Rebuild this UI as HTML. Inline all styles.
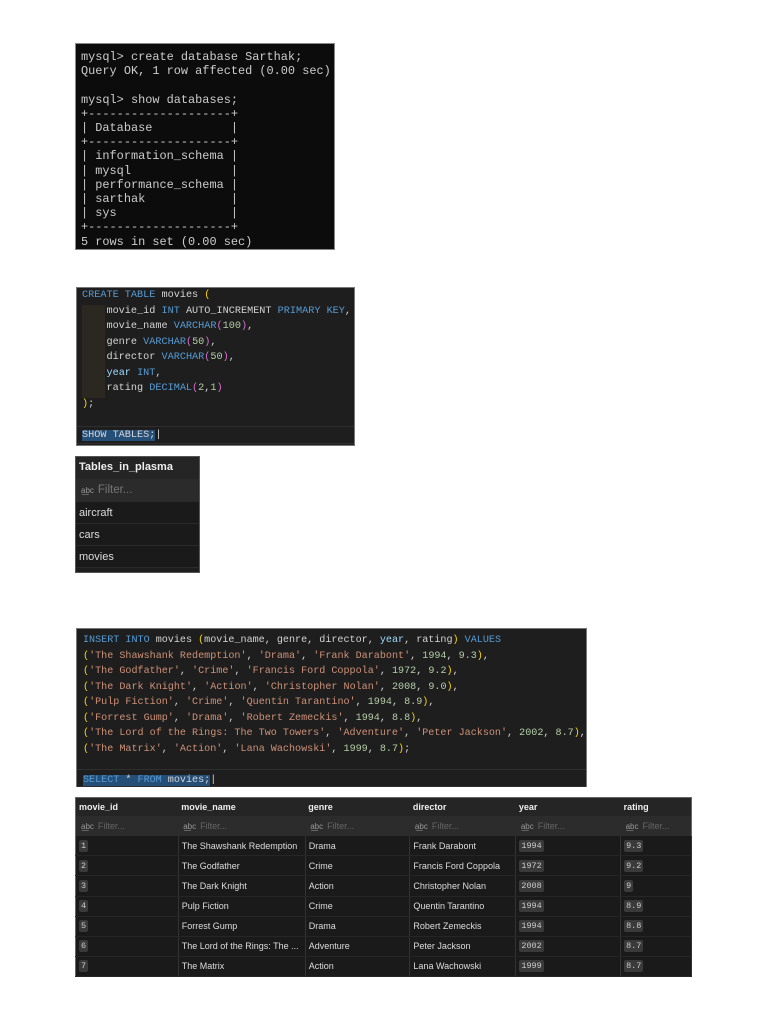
<!DOCTYPE html>
<html><head><meta charset="utf-8"><style>
*{margin:0;padding:0;box-sizing:border-box}
body{width:768px;height:1024px;background:#fff;position:relative;overflow:hidden}
.mono{font-family:"Liberation Mono",monospace;white-space:pre}
#t1{position:absolute;left:75px;top:43px;width:260px;height:207px;background:#0c0c0c;border:1px solid #888;color:#cccccc;font-size:11.9px;line-height:14.2px;padding:6px 0 0 5px}
#t2{position:absolute;left:76px;top:287px;width:279px;height:159px;background:#1e1e1e;border:1px solid #777;color:#d4d4d4;font-size:10.2px;line-height:15.5px;padding:0 0 0 5px}
#t4{position:absolute;left:76px;top:628px;width:511px;height:159px;background:#1e1e1e;border:1px solid #777;color:#d4d4d4;font-size:10.1px;line-height:15.5px;padding:4px 0 0 6px}
.k{color:#569cd6}.p{color:#ffd700}.m{color:#da70d6}.n{color:#b5cea8}.s{color:#ce9178}.i{color:#9cdcfe}
.guide{position:absolute;left:5px;top:17px;width:23px;height:93px;background:#2b2822}
.hl{background:#264f78}
.cur{position:absolute;left:0;right:0;border-top:1px solid #2e2e2e;border-bottom:1px solid #2e2e2e}
.sans{font-family:"Liberation Sans",sans-serif}
#t3{position:absolute;left:75px;top:456px;width:125px;height:117px;background:#1e1e1e;border:1px solid #555;font-size:11px;color:#ddd}
#t3 .h{height:22px;background:#252526;font-weight:bold;padding:4px 3px;color:#eee}
#t3 .f{height:23px;background:#2b2b2b;padding:5px 5px;color:#777;font-size:11.5px}
#t3 .r{height:22px;border-bottom:1px solid #2a2a2a;padding:5px 3px;background:#1a1a1a}
#t5{position:absolute;left:75px;top:797px;width:617px;height:180px;background:#1e1e1e;border:1px solid #666;font-size:9px;color:#ddd;border-collapse:collapse}
#t5 td{border-right:1px solid #333;padding:0 3px;white-space:nowrap;overflow:hidden}
#t5 tr.h td{height:18px;background:#252526;font-weight:bold;color:#eee;border-right:none}
#t5 tr.f td{height:20px;background:#2c2c2c;color:#666;border-right:none;padding-left:5px}
#t5 tr.r td{height:20px;border-bottom:1px solid #262626;background:#1a1a1a}
.b{display:inline-block;background:#3a3a3a;border-radius:2px;padding:1px 2px;font-family:"Liberation Mono",monospace;font-size:8.5px;color:#ccc}
.ic{color:#999;font-size:8px;margin-right:4px}
</style></head><body>

<div id="t1" class="mono">mysql&gt; create database Sarthak;
Query OK, 1 row affected (0.00 sec)

mysql&gt; show databases;
+--------------------+
| Database           |
+--------------------+
| information_schema |
| mysql              |
| performance_schema |
| sarthak            |
| sys                |
+--------------------+
5 rows in set (0.00 sec)</div>

<div id="t2" class="mono"><div class="guide"></div><div class="cur" style="top:138px;height:18px"></div><div style="position:relative"><span class="k">CREATE TABLE</span> movies <span class="p">(</span>
    movie_id <span class="k">INT</span> AUTO_INCREMENT <span class="k">PRIMARY KEY</span>,
    movie_name <span class="k">VARCHAR</span><span class="m">(</span><span class="n">100</span><span class="m">)</span>,
    genre <span class="k">VARCHAR</span><span class="m">(</span><span class="n">50</span><span class="m">)</span>,
    director <span class="k">VARCHAR</span><span class="m">(</span><span class="n">50</span><span class="m">)</span>,
    <span class="i">year</span> <span class="k">INT</span>,
    rating <span class="k">DECIMAL</span><span class="m">(</span><span class="n">2</span>,<span class="n">1</span><span class="m">)</span>
<span class="p">)</span>;

<span class="hl">SHOW TABLES;</span>|</div></div>

<div id="t3" class="sans">
<div class="h">Tables_in_plasma</div>
<div class="f"><span class="ic">a͟bc</span>Filter...</div>
<div class="r">aircraft</div>
<div class="r">cars</div>
<div class="r">movies</div>
</div>

<div id="t4" class="mono"><div class="cur" style="top:140px;height:18px"></div><div style="position:relative"><span class="k">INSERT INTO</span> movies <span class="p">(</span>movie_name, genre, director, <span class="i">year</span>, rating<span class="p">)</span> <span class="k">VALUES</span>
<span class="p">(</span><span class="s">'The Shawshank Redemption'</span>, <span class="s">'Drama'</span>, <span class="s">'Frank Darabont'</span>, <span class="n">1994</span>, <span class="n">9.3</span><span class="p">)</span>,
<span class="p">(</span><span class="s">'The Godfather'</span>, <span class="s">'Crime'</span>, <span class="s">'Francis Ford Coppola'</span>, <span class="n">1972</span>, <span class="n">9.2</span><span class="p">)</span>,
<span class="p">(</span><span class="s">'The Dark Knight'</span>, <span class="s">'Action'</span>, <span class="s">'Christopher Nolan'</span>, <span class="n">2008</span>, <span class="n">9.0</span><span class="p">)</span>,
<span class="p">(</span><span class="s">'Pulp Fiction'</span>, <span class="s">'Crime'</span>, <span class="s">'Quentin Tarantino'</span>, <span class="n">1994</span>, <span class="n">8.9</span><span class="p">)</span>,
<span class="p">(</span><span class="s">'Forrest Gump'</span>, <span class="s">'Drama'</span>, <span class="s">'Robert Zemeckis'</span>, <span class="n">1994</span>, <span class="n">8.8</span><span class="p">)</span>,
<span class="p">(</span><span class="s">'The Lord of the Rings: The Two Towers'</span>, <span class="s">'Adventure'</span>, <span class="s">'Peter Jackson'</span>, <span class="n">2002</span>, <span class="n">8.7</span><span class="p">)</span>,
<span class="p">(</span><span class="s">'The Matrix'</span>, <span class="s">'Action'</span>, <span class="s">'Lana Wachowski'</span>, <span class="n">1999</span>, <span class="n">8.7</span><span class="p">)</span>;

<span class="hl"><span class="k">SELECT</span> * <span class="k">FROM</span> movies;</span>|</div></div>

<table id="t5" class="sans">
<colgroup><col style="width:103px"><col style="width:127px"><col style="width:105px"><col style="width:106px"><col style="width:105px"><col style="width:71px"></colgroup>
<tr class="h"><td>movie_id</td><td>movie_name</td><td>genre</td><td>director</td><td>year</td><td>rating</td></tr>
<tr class="f"><td><span class="ic">a͟bc</span>Filter...</td><td><span class="ic">a͟bc</span>Filter...</td><td><span class="ic">a͟bc</span>Filter...</td><td><span class="ic">a͟bc</span>Filter...</td><td><span class="ic">a͟bc</span>Filter...</td><td><span class="ic">a͟bc</span>Filter...</td></tr>
<tr class="r"><td><span class="b">1</span></td><td>The Shawshank Redemption</td><td>Drama</td><td>Frank Darabont</td><td><span class="b">1994</span></td><td><span class="b">9.3</span></td></tr>
<tr class="r"><td><span class="b">2</span></td><td>The Godfather</td><td>Crime</td><td>Francis Ford Coppola</td><td><span class="b">1972</span></td><td><span class="b">9.2</span></td></tr>
<tr class="r"><td><span class="b">3</span></td><td>The Dark Knight</td><td>Action</td><td>Christopher Nolan</td><td><span class="b">2008</span></td><td><span class="b">9</span></td></tr>
<tr class="r"><td><span class="b">4</span></td><td>Pulp Fiction</td><td>Crime</td><td>Quentin Tarantino</td><td><span class="b">1994</span></td><td><span class="b">8.9</span></td></tr>
<tr class="r"><td><span class="b">5</span></td><td>Forrest Gump</td><td>Drama</td><td>Robert Zemeckis</td><td><span class="b">1994</span></td><td><span class="b">8.8</span></td></tr>
<tr class="r"><td><span class="b">6</span></td><td>The Lord of the Rings: The ...</td><td>Adventure</td><td>Peter Jackson</td><td><span class="b">2002</span></td><td><span class="b">8.7</span></td></tr>
<tr class="r"><td><span class="b">7</span></td><td>The Matrix</td><td>Action</td><td>Lana Wachowski</td><td><span class="b">1999</span></td><td><span class="b">8.7</span></td></tr>
</table>
</body></html>
